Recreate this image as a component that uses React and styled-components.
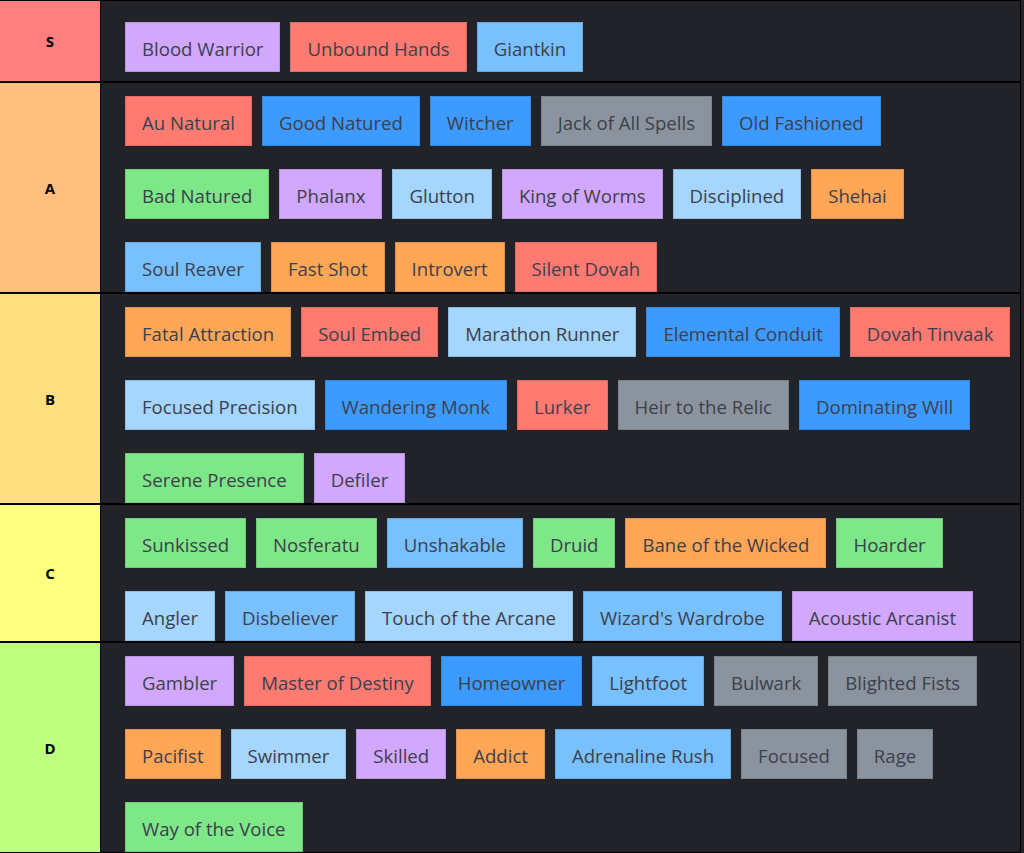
import React from 'react';
import styled, { createGlobalStyle } from 'styled-components';

const GlobalStyle = createGlobalStyle`
  html, body {
    margin: 0;
    padding: 0;
    background: #212329;
  }
  body {
    font-family: "Open Sans", "Noto Sans", sans-serif;
  }
`;

const colors = {
  purple: '#d2a8ff',
  red: '#ff7b72',
  sky: '#79c0ff',
  blue: '#3d9bff',
  gray: '#8b949e',
  green: '#7ee787',
  pale: '#a5d6ff',
  orange: '#ffa657',
};

const tiers = [
  {
    name: 'S',
    color: '#ff7f7f',
    items: [
      ['Blood Warrior', 'purple'],
      ['Unbound Hands', 'red'],
      ['Giantkin', 'sky'],
    ],
  },
  {
    name: 'A',
    color: '#ffbf7f',
    items: [
      ['Au Natural', 'red'],
      ['Good Natured', 'blue'],
      ['Witcher', 'blue'],
      ['Jack of All Spells', 'gray'],
      ['Old Fashioned', 'blue'],
      ['Bad Natured', 'green'],
      ['Phalanx', 'purple'],
      ['Glutton', 'pale'],
      ['King of Worms', 'purple'],
      ['Disciplined', 'pale'],
      ['Shehai', 'orange'],
      ['Soul Reaver', 'sky'],
      ['Fast Shot', 'orange'],
      ['Introvert', 'orange'],
      ['Silent Dovah', 'red'],
    ],
  },
  {
    name: 'B',
    color: '#ffdf7f',
    items: [
      ['Fatal Attraction', 'orange'],
      ['Soul Embed', 'red'],
      ['Marathon Runner', 'pale'],
      ['Elemental Conduit', 'blue'],
      ['Dovah Tinvaak', 'red'],
      ['Focused Precision', 'pale'],
      ['Wandering Monk', 'blue'],
      ['Lurker', 'red'],
      ['Heir to the Relic', 'gray'],
      ['Dominating Will', 'blue'],
      ['Serene Presence', 'green'],
      ['Defiler', 'purple'],
    ],
  },
  {
    name: 'C',
    color: '#ffff7f',
    items: [
      ['Sunkissed', 'green'],
      ['Nosferatu', 'green'],
      ['Unshakable', 'sky'],
      ['Druid', 'green'],
      ['Bane of the Wicked', 'orange'],
      ['Hoarder', 'green'],
      ['Angler', 'pale'],
      ['Disbeliever', 'sky'],
      ['Touch of the Arcane', 'pale'],
      ["Wizard's Wardrobe", 'sky'],
      ['Acoustic Arcanist', 'purple'],
    ],
  },
  {
    name: 'D',
    color: '#bfff7f',
    items: [
      ['Gambler', 'purple'],
      ['Master of Destiny', 'red'],
      ['Homeowner', 'blue'],
      ['Lightfoot', 'sky'],
      ['Bulwark', 'gray'],
      ['Blighted Fists', 'gray'],
      ['Pacifist', 'orange'],
      ['Swimmer', 'pale'],
      ['Skilled', 'purple'],
      ['Addict', 'orange'],
      ['Adrenaline Rush', 'sky'],
      ['Focused', 'gray'],
      ['Rage', 'gray'],
      ['Way of the Voice', 'green'],
    ],
  },
];

const Board = styled.div`
  width: 1021px;
  border-top: 1px solid #000;
  border-right: 1px solid #000;
  box-sizing: border-box;
`;

const TierRow = styled.div`
  display: flex;
  border-bottom: 2px solid #000;
  min-height: 80px;
`;

const Label = styled.div`
  flex: 0 0 100px;
  display: flex;
  align-items: center;
  justify-content: center;
  background: ${(p) => p.$color};
  border-right: 1px solid #000;
  color: #000;
  font-family: "Open Sans", "Noto Sans", sans-serif;
  font-weight: 700;
  font-size: 15px;
`;

const Items = styled.div`
  flex: 1;
  display: flex;
  flex-wrap: wrap;
  align-content: flex-start;
  column-gap: 10px;
  row-gap: 23px;
  padding: ${(p) => (p.$first ? '21px' : '13px')} 8px 0 24px;
`;

const Tag = styled.div`
  height: 50px;
  box-sizing: border-box;
  display: flex;
  align-items: center;
  padding: 3px 16px 0;
  background: ${(p) => colors[p.$kind]};
  border: 1px solid rgba(0, 0, 0, 0.12);
  color: #3c404c;
  font-size: 18.6px;
  white-space: nowrap;
`;

export default function App() {
  return (
    <>
      <GlobalStyle />
      <Board>
        {tiers.map((tier, i) => (
          <TierRow key={tier.name}>
            <Label $color={tier.color}>{tier.name}</Label>
            <Items $first={i === 0}>
              {tier.items.map(([label, kind]) => (
                <Tag key={label} $kind={kind}>
                  {label}
                </Tag>
              ))}
            </Items>
          </TierRow>
        ))}
      </Board>
    </>
  );
}
